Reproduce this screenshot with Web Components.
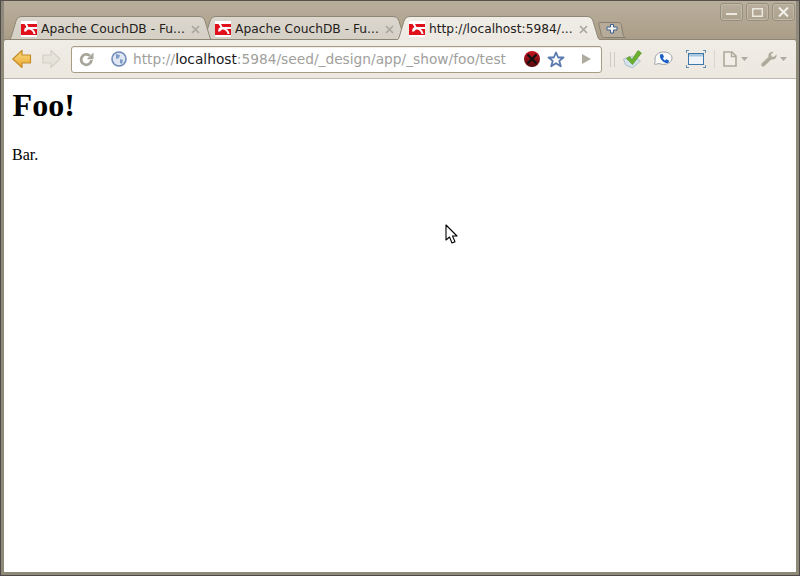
<!DOCTYPE html>
<html><head><meta charset="utf-8"><style>
html,body{margin:0;padding:0;width:800px;height:576px;overflow:hidden}
</style></head><body>
<browser-window>
  <tab-strip slot="tabs">
    <browser-tab style="z-index:1">Apache CouchDB - Fu...</browser-tab>
    <browser-tab>Apache CouchDB - Fu...</browser-tab>
    <browser-tab active>http://localhost:5984/...</browser-tab>
    <new-tab></new-tab>
  </tab-strip>
  <window-controls slot="controls"></window-controls>
  <tool-bar slot="toolbar"></tool-bar>
  <page-content></page-content>
  <mouse-cursor></mouse-cursor>
</browser-window>
<script>
function def(name, html){
  customElements.define(name, class extends HTMLElement{
    constructor(){super();this.attachShadow({mode:'open'}).innerHTML=html;}
  });
}
def('browser-window',`<style>
:host{display:flex;flex-direction:column;position:relative;width:800px;height:576px;box-sizing:border-box;
 border:1px solid #4e4b45;border-top-color:#56524b;background:#8f897a;overflow:hidden}
.title{height:39px;flex:none;display:flex;justify-content:space-between;align-items:flex-start;
 background:linear-gradient(#b9ae9c,#b1a590 60%,#a99d88);box-sizing:border-box;border-left:3px solid #8f897d;border-right:3px solid #8f897d;padding-left:2px;box-shadow:inset 0 -1px 0 #8e8675}
.body{flex:1;display:flex;flex-direction:column;min-height:0;margin:0 3px 3px 3px}
</style>
<div class="title"><slot name="tabs"></slot><slot name="controls"></slot></div>
<div class="body"><slot name="toolbar"></slot><slot></slot></div>`);
const fav=`<svg width="16" height="16" viewBox="0 0 16 16" style="flex:none;display:block"><rect width="16" height="16" fill="#fff"/><rect y="3" width="16" height="11" fill="#e0111a"/><path d="M3.500 3H6l1.500 3H16v2h-4.500c1.800 1 2.800 3 3 5h-2c-.2-2.500-2.500-4.500-5.500-4.500L5 10.500H3l.6-3L5.500 6z" fill="#fff"/></svg>`;
def('browser-tab',`<style>
:host{display:flex;align-items:center;position:relative;width:194px;height:24px;box-sizing:border-box;padding:2px 0 0 15px;
 font:12.25px "DejaVu Sans",sans-serif;color:#24201a}
svg.bg{position:absolute;left:2px;top:0;width:205px;height:24px}
.i{position:relative;display:flex;align-items:center;width:100%;gap:4px}
.t{flex:1;white-space:nowrap;overflow:hidden}
.x{width:9px;height:9px;flex:none}
.f{fill:url(#i)}
:host([active]) .f{fill:url(#a)}
.b{stroke:#8e8675;stroke-width:1}
:host([active]) .b{display:none}
</style>
<svg class="bg" viewBox="0 0 205 24"><defs><linearGradient id="i" x1="0" y1="0" x2="0" y2="1"><stop offset="0" stop-color="#dbd7ce"/><stop offset="1" stop-color="#d5d0c6"/></linearGradient><linearGradient id="a" x1="0" y1="0" x2="0" y2="1"><stop offset="0" stop-color="#f0ede7"/><stop offset="1" stop-color="#ede9e2"/></linearGradient></defs>
<path class="f" d="M0 24c2 0 2.500-1 3.500-4l4.500-15c1-3 3-4.500 6-4.500h177c3 0 5 1.500 6 4.500l4.500 15c1 3 1.500 4 3.500 4" stroke="#8e8675" stroke-width="1"/><path class="b" d="M0 23.500h205"/></svg>
<div class="i">${fav}<span class="t"><slot></slot></span><svg class="x" viewBox="0 0 9 9"><path d="M1 1l7 7M8 1l-7 7" stroke="#aaa79f" stroke-width="1.700"/></svg></div>`);
def('tab-strip',`<style>
:host{display:flex;margin-top:15px;height:24px;position:relative;align-items:flex-end}
::slotted(browser-tab[active]){z-index:2}
</style><slot></slot>`);
def('new-tab',`<style>
:host{display:block;position:relative;width:28px;height:16px;margin-left:10px;align-self:flex-start;margin-top:6px}
svg{display:block}
</style><svg width="28" height="16" viewBox="0 0 28 16"><path d="M1.500.5h19c2 0 2.500 1 3 3l1.500 9c.4 1.800 1 2.500 2.500 3H6.500c-2 0-2.700-1-3.200-3L1 3C.6 1.500.6.5 1.500.5z" fill="#b5ab98" stroke="#877f6f"/><path d="M9 5h3.500V2.500h3V5H19v3h-3.500v3h-3V8H9z" fill="#f4f2ec" stroke="#3f5f8c" stroke-width="1"/></svg>`);
def('window-controls',`<style>
:host{display:flex;gap:3px;margin-right:1px;margin-top:2px}
.b{width:23px;height:18px;box-sizing:border-box;border:1px solid #978f7d;border-radius:3px;background:linear-gradient(#b8ae9c,#aca18c);box-shadow:inset 0 0 0 1px #c2b9a8;display:flex;align-items:center;justify-content:center}
</style>
<div class="b"><svg width="11" height="9" viewBox="0 0 11 9"><rect y="5" width="11" height="2" fill="#ebe8e0"/></svg></div>
<div class="b"><svg width="11" height="9" viewBox="0 0 11 9"><rect x=".75" y=".75" width="9.500" height="7.500" fill="none" stroke="#ebe8e0" stroke-width="1.500"/></svg></div>
<div class="b"><svg width="11" height="10" viewBox="0 0 11 10"><path d="M1 .5l9 9M10 .5l-9 9" stroke="#f3f1ec" stroke-width="2"/></svg></div>`);
def('tool-bar',`<style>
:host{display:flex;align-items:center;height:39px;flex:none;box-sizing:border-box;background:linear-gradient(#f0ede6,#ece8e0);border-bottom:1px solid #bdb9ae;padding:0 0 0 8px;position:relative;border-radius:2px 2px 0 0}
svg{display:block;flex:none}
.url{display:flex;align-items:center;width:531px;height:27px;box-sizing:border-box;margin-left:10px;background:#fff;border:1px solid #a79c84;border-radius:3px;padding-left:7px;font:13.75px "DejaVu Sans",sans-serif;color:#a0a09c;white-space:nowrap;box-shadow:inset 0 1px 0 #f0eee9}
.url .txt{margin-left:6px;flex:1}
.url b{font-weight:normal;color:#1a1a1a}
.sep{width:3px;height:15px;border-left:1px solid #cfcbc2;border-right:1px solid #cfcbc2;margin-left:8px}
.sep2{width:1px;height:18px;background:#d9d5cc}
</style>
<svg width="21" height="20" viewBox="0 0 21 20"><defs><linearGradient id="or" x1="0" y1="0" x2="0" y2="1"><stop offset="0" stop-color="#fadd82"/><stop offset="1" stop-color="#e8a62e"/></linearGradient></defs><path d="M.8 10L10 1.500V6h8.500v8H10v4.500z" fill="url(#or)" stroke="#c68a2a" stroke-width="1.200" stroke-linejoin="round"/></svg>
<svg style="margin-left:9px" width="19" height="20" viewBox="0 0 19 20"><path d="M18 10L9 1.500V6H.8v8H9v4.500z" fill="#e6e3db" stroke="#d3d0c6" stroke-width="1.200" stroke-linejoin="round"/></svg>
<div class="url">
<svg width="15" height="15" viewBox="0 0 15 15"><path d="M12.500 8a5.200 5.200 0 1 1-1.600-4.200" fill="none" stroke="#a8a59b" stroke-width="2.800"/><path d="M14.500.5v6.700H7.800z" fill="#a8a59b"/></svg>
<svg width="16" height="16" viewBox="0 0 16 16" style="margin-left:17px"><circle cx="8" cy="8" r="7" fill="#dfe6f2" stroke="#6f8bb8" stroke-width="1.600"/><path d="M5 3l4 1-1 3-3 1zM9 8l3 1-1 4-2-1z" fill="#7f9cc9"/></svg>
<span class="txt">http://<b>localhost</b>:5984/seed/_design/app/_show/foo/test</span>
<svg width="16" height="16" viewBox="0 0 16 16"><defs><linearGradient id="rd" x1="0" y1="0" x2="0" y2="1"><stop offset="0" stop-color="#c8141f"/><stop offset="1" stop-color="#520a0e"/></linearGradient></defs><circle cx="8" cy="8" r="8" fill="url(#rd)"/><path d="M3.500 12.500l9-9M3.500 3.500l9 9" stroke="#111" stroke-width="2.200"/></svg>
<svg style="margin-left:7px" width="18" height="17" viewBox="0 0 18 17"><path d="M9 1.500l2.200 5h5.300l-4.200 3.400 1.500 5.400L9 12.200l-4.800 3.100 1.500-5.400L1.500 6.500h5.300z" fill="#fff" stroke="#5b79ae" stroke-width="1.800" stroke-linejoin="round"/></svg>
<svg style="margin:0 9px 0 16px" width="11" height="12" viewBox="0 0 11 12"><path d="M1 1l9 5-9 5z" fill="#aeaba1"/></svg>
</div>
<div class="sep"></div>
<svg style="margin-left:8px" width="20" height="20" viewBox="0 0 20 20"><path d="M.5 10l9-3 8 5-8 7-7-3z" fill="#d3e2ea" stroke="#b3c2c9"/><path d="M3.500 9.500L6.500 7.500l2.500 3L15 1.500l3.500 2.500-9 11.500z" fill="#6cb030" stroke="#4f8b1f" stroke-width=".6"/></svg>
<svg style="margin-left:11px" width="19" height="17" viewBox="0 0 19 17"><path d="M9.500 1C4.500 1 1 4 1 8c0 1.500.500 3-1 5 2 .5 3.500 0 5-.5 1.200.5 3 .9 4.500.9 5 0 8.500-2.900 8.500-6.400S14.500 1 9.500 1z" fill="#fbfbfb" stroke="#9ca1a6"/><path d="M6 3.500L8.800 3l1.200 3-1.200 1.200c.5 1 1.200 1.700 2.200 2.200l1.200-1.200 2.800 1.300-.6 2.500C10 12.800 5 8 6 3.500z" fill="#1a5fc8"/></svg>
<svg style="margin-left:13px" width="20" height="18" viewBox="0 0 20 18"><rect x="2.500" y="3.500" width="15" height="11" fill="#eef3f8" stroke="#3e76a8"/><rect x="3" y="4" width="14" height="2.500" fill="#a9c6e2"/><path d="M0 3V0h3M17 0h3v3M0 15v3h3M17 18h3v-3" fill="none" stroke="#3e76a8" stroke-width="1.500"/></svg>
<div class="sep2" style="margin-left:8px"></div>
<svg style="margin-left:8px" width="14" height="16" viewBox="0 0 14 16"><path d="M1 1h8l4 4v10H1z" fill="#f1eee7" stroke="#aea99b" stroke-width="1.600"/><path d="M8.500 1v4.500H13" fill="none" stroke="#aea99b" stroke-width="1.400"/></svg>
<svg style="margin-left:4px" width="7" height="4" viewBox="0 0 7 4"><path d="M0 0h7L3.500 4z" fill="#aeaa9f"/></svg>
<svg style="margin-left:13px" width="16" height="16" viewBox="0 0 16 16"><path d="M15.500 3.500c.3 1.500-.2 3-1.200 4-1 1-2.600 1.300-4 .9L3.500 15c-.8.800-2 .8-2.700 0-.8-.7-.8-1.900 0-2.700L7.500 6c-.4-1.500 0-3 1-4 1.100-1.100 2.600-1.400 4-1.100L10 3.500l.6 2 2 .5z" fill="#aeaa9c"/></svg>
<svg style="margin-left:3px" width="7" height="4" viewBox="0 0 7 4"><path d="M0 0h7L3.500 4z" fill="#aeaa9f"/></svg>`);
def('page-content',`<style>
:host{display:block;flex:1;background:#fff;color:#000;font-family:"Liberation Serif",serif;padding:8px;min-height:0;font-size:16px}
h1{font-size:32px;font-weight:bold;margin:0 0 22.44px .6px}
p{margin:0}
</style><h1>Foo!</h1><p>Bar.</p>`);
def('mouse-cursor',`<style>
:host{position:absolute;left:444px;top:223px;display:block;width:14px;height:21px}
</style><svg width="14" height="21" viewBox="0 0 14 21"><path d="M1 1v15l3.500-3 2.500 6 3-1.300-2.500-5.700h4.500z" fill="#fff" stroke="#000" stroke-width="1.100" stroke-linejoin="round"/></svg>`);
</script>
</body></html>
